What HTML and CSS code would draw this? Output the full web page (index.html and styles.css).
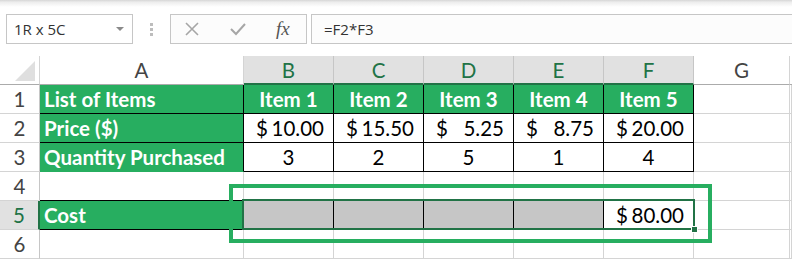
FILE: index.html
```html
<!DOCTYPE html>
<html lang="en">
<head>
    <meta charset="UTF-8">
    <title>Sheet</title>
    <link rel="stylesheet" href="styles.css">
</head>
<body>
    <div class="ribbon"></div>
    <div class="fbar">
        <div class="namebox">
            <span>1R x 5C</span>
            <i class="caret"></i>
        </div>
        <div class="grip"><i></i><i></i><i></i></div>
        <div class="funcs">
            <svg width="16" height="14" viewBox="0 0 16 14"><path d="M2 1 L14 13 M14 1 L2 13" stroke="#a6a6a6" stroke-width="1.6" fill="none"/></svg>
            <svg width="16" height="14" viewBox="0 0 16 14"><path d="M1 7 L6 12 L15 2" stroke="#a6a6a6" stroke-width="2" fill="none"/></svg>
            <span class="fx">fx</span>
        </div>
        <div class="formula">=F2*F3</div>
    </div>

    <div class="sheet">
        <div class="corner"><i></i></div>
        <div class="colh">A</div>
        <div class="colh sel">B</div>
        <div class="colh sel">C</div>
        <div class="colh sel">D</div>
        <div class="colh sel">E</div>
        <div class="colh sel">F</div>
        <div class="colh">G</div>
        <div class="colh rest"></div>

        <div class="rowh">1</div>
        <div class="c lab bt">List of Items</div>
        <div class="c head">Item 1</div>
        <div class="c head">Item 2</div>
        <div class="c head">Item 3</div>
        <div class="c head">Item 4</div>
        <div class="c head">Item 5</div>
        <div class="c"></div>
        <div class="c rest"></div>

        <div class="rowh">2</div>
        <div class="c lab bt">Price ($)</div>
        <div class="c val"><span>$</span><span>10.00</span></div>
        <div class="c val"><span>$</span><span>15.50</span></div>
        <div class="c val"><span>$</span><span>5.25</span></div>
        <div class="c val"><span>$</span><span>8.75</span></div>
        <div class="c val"><span>$</span><span>20.00</span></div>
        <div class="c"></div>
        <div class="c rest"></div>

        <div class="rowh">3</div>
        <div class="c lab">Quantity Purchased</div>
        <div class="c num">3</div>
        <div class="c num">2</div>
        <div class="c num">5</div>
        <div class="c num">1</div>
        <div class="c num">4</div>
        <div class="c"></div>
        <div class="c rest"></div>

        <div class="rowh">4</div>
        <div class="c bb"></div>
        <div class="c"></div>
        <div class="c"></div>
        <div class="c"></div>
        <div class="c"></div>
        <div class="c"></div>
        <div class="c"></div>
        <div class="c rest"></div>

        <div class="rowh on">5</div>
        <div class="c lab bt">Cost</div>
        <div class="c grey"></div>
        <div class="c grey"></div>
        <div class="c grey"></div>
        <div class="c grey"></div>
        <div class="c val"><span>$</span><span>80.00</span></div>
        <div class="c"></div>
        <div class="c rest"></div>

        <div class="rowh">6</div>
        <div class="c"></div>
        <div class="c"></div>
        <div class="c"></div>
        <div class="c"></div>
        <div class="c"></div>
        <div class="c"></div>
        <div class="c"></div>
        <div class="c rest"></div>

        <div class="selection"><i class="handle"></i></div>
        <div class="mark"></div>
    </div>
</body>
</html>
```

FILE: styles.css
```css
*{
    margin: 0px;
    padding: 0px;
    box-sizing: border-box;
}
body{
    background: #fff;
    font-family: Lato, "Open Sans", sans-serif;
    overflow: hidden;
}
.ribbon{
    height: 7px;
    background: linear-gradient(#d6d6d6, #ededed 30%, #fff);
}
.fbar{
    display: flex;
    height: 30px;
    margin-top: 7px;
    font-family: "Open Sans", sans-serif;
    font-size: 15px;
    color: #333;
}
.namebox{
    display: flex;
    align-items: center;
    justify-content: space-between;
    width: 127px;
    margin-left: 6px;
    padding: 0 8px 0 7px;
    border: 1px solid #c6c6c6;
    background: #fff;
}
.caret{
    border-left: 4px solid transparent;
    border-right: 4px solid transparent;
    border-top: 4px solid #8a8a8a;
}
.grip{
    display: flex;
    flex-direction: column;
    justify-content: center;
    align-items: center;
    gap: 2px;
    width: 37px;
}
.grip i{
    width: 3px;
    height: 3px;
    background: #bdbdbd;
}
.funcs{
    display: flex;
    align-items: center;
    gap: 30px;
    width: 137px;
    padding-left: 13px;
    border: 1px solid #c6c6c6;
    background: #fcfcfc;
}
.fx{
    font-family: "Liberation Serif", serif;
    font-style: italic;
    font-size: 19px;
    color: #555;
}
.formula{
    flex: 1;
    display: flex;
    align-items: center;
    margin-left: 4px;
    padding-left: 12px;
    border: 1px solid #c6c6c6;
    border-right: none;
    background: #fcfcfc;
}
.sheet{
    position: relative;
    display: grid;
    grid-template-columns: 40px 204px 90px 90px 90px 90px 90px 96px 1fr;
    grid-auto-rows: 29px;
    margin-top: 12px;
    font-size: 20.5px;
    color: #000;
}
.corner{
    position: relative;
    border-right: 1px solid #d4d4d4;
    border-bottom: 1px solid #ababab;
}
.corner i{
    position: absolute;
    right: 4px;
    bottom: 3px;
    border-left: 20px solid transparent;
    border-bottom: 20px solid #dfdfdf;
}
.colh{
    display: flex;
    align-items: center;
    justify-content: center;
    color: #444;
    border-right: 1px solid #d4d4d4;
    border-bottom: 1px solid #ababab;
}
.colh.sel{
    background: #e1e1e1;
    color: #217346;
    border-right-color: #c6c6c6;
    border-bottom: 2px solid #217346;
}
.rest{
    border-right: none;
}
.rowh{
    display: flex;
    align-items: center;
    justify-content: center;
    color: #444;
    border-right: 1px solid #c6c6c6;
    border-bottom: 1px solid #d4d4d4;
}
.rowh.on{
    background: #e1e1e1;
    color: #217346;
    border-right: 2px solid #217346;
}
.c{
    display: flex;
    align-items: center;
    border-right: 1px solid #d4d4d4;
    border-bottom: 1px solid #d4d4d4;
}
.lab{
    padding-left: 4px;
    background: #27ae60;
    color: #fff;
    font-weight: bold;
    border-right-color: #000;
    border-bottom-color: #27ae60;
}
.lab.bt{
    border-bottom-color: #000;
}
.bb{
    border-bottom-color: #000;
}
.head{
    justify-content: center;
    background: #27ae60;
    color: #fff;
    font-weight: bold;
    border-right-color: #000;
    border-bottom-color: #000;
}
.val{
    justify-content: space-between;
    padding: 0 9px 0 12px;
    border-right-color: #000;
    border-bottom-color: #000;
}
.num{
    justify-content: center;
    border-right-color: #000;
    border-bottom-color: #000;
}
.grey{
    background: #c6c6c6;
    border-right-color: #000;
}
.selection{
    position: absolute;
    left: 242px;
    top: 143px;
    width: 453px;
    height: 31px;
    border: 2px solid #217346;
}
.handle{
    position: absolute;
    right: -5px;
    bottom: -5px;
    width: 7px;
    height: 7px;
    background: #217346;
    border: 1px solid #fff;
}
.mark{
    position: absolute;
    left: 229px;
    top: 128px;
    width: 483px;
    height: 59px;
    border: 4px solid #27ae60;
}
```
